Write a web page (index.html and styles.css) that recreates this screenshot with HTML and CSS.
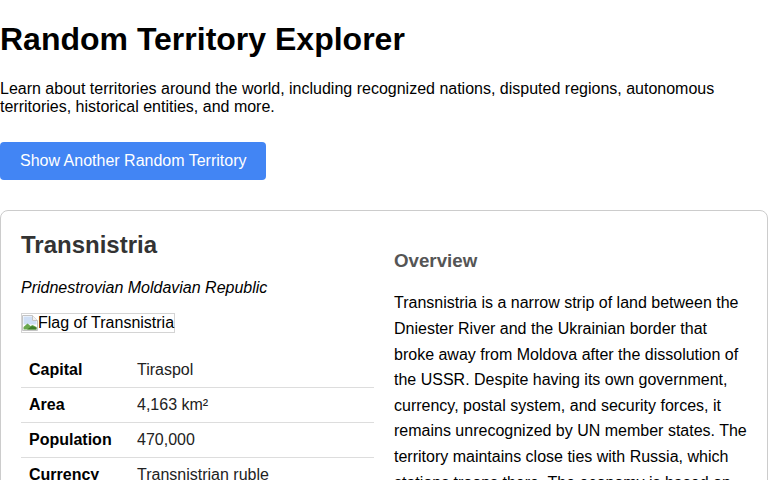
FILE: index.html
```html
<!DOCTYPE html>
<html lang="en">
<head>
<meta charset="utf-8">
<title>Random Territory Explorer</title>
<link rel="stylesheet" href="styles.css">
</head>
<body>
<h1 class="title">Random Territory Explorer</h1>
<p class="intro">Learn about territories around the world, including recognized nations, disputed regions, autonomous territories, historical entities, and more.</p>
<button class="btn">Show Another Random Territory</button>
<section class="card">
  <div class="col">
    <h2 class="name">Transnistria</h2>
    <p class="official">Pridnestrovian Moldavian Republic</p>
    <div class="flag"><svg class="broken" width="16" height="16" viewBox="0 0 16 16"><path d="M.5.5h10l5 5v10H.5z" fill="#fff" stroke="#c4c4c4"/><path d="M10.5.5v5h5" fill="#f2f2f2" stroke="#c4c4c4"/><path d="M1.500 1.500h8.500v4.500h4.500v3.500h-13z" fill="#cfdff5"/><path d="M1.500 14.500v-2.500l4-3.500 3 2.500 2-1 4 2v2.500z" fill="#6aa84f"/><path d="M5 14.500l5-3.500 4.500 1.500v2z" fill="#3f7d2a"/></svg><span>Flag of Transnistria</span></div>
    <table class="facts">
      <tr><th>Capital</th><td>Tiraspol</td></tr>
      <tr><th>Area</th><td>4,163 km²</td></tr>
      <tr><th>Population</th><td>470,000</td></tr>
      <tr><th>Currency</th><td>Transnistrian ruble</td></tr>
    </table>
  </div>
  <div class="col">
    <h3 class="overview">Overview</h3>
    <p class="desc">Transnistria is a narrow strip of land between the Dniester River and the Ukrainian border that broke away from Moldova after the dissolution of the USSR. Despite having its own government, currency, postal system, and security forces, it remains unrecognized by UN member states. The territory maintains close ties with Russia, which stations troops there. The economy is based on</p>
  </div>
</section>
</body>
</html>
```
FILE: styles.css
```css
html, body { margin: 0; padding: 0; }
body { font-family: "Liberation Sans", Arial, sans-serif; font-size: 16px; line-height: 1.15; color: #000; background: #fff; height: 480px; overflow: hidden; }
.title { font-size: 32px; line-height: 37px; font-weight: 700; margin: 0; padding-top: 21px; }
.intro { margin: 22px 0 0; line-height: 18px; }
.btn { display: block; margin-top: 26px; height: 38px; padding: 0 20px; border: 0; border-radius: 4px; background: #4285f4; color: #fff; font: 16px "Liberation Sans", Arial, sans-serif; }
.card { margin-top: 30px; border: 1px solid #ccc; border-radius: 8px; padding: 20px; display: grid; grid-template-columns: 1fr 1fr; gap: 20px; }
.name { margin: 0; font-size: 24px; line-height: 28px; font-weight: 700; color: #333; }
.official { margin: 20px 0 0; font-style: italic; line-height: 18px; }
.flag { display: inline-flex; align-items: center; margin-top: 16px; border: 1px solid #d4d4d4; height: 18px; }
.facts { width: 100%; border-collapse: collapse; margin-top: 18px; }
.facts th { text-align: left; padding: 8px; font-weight: 700; border-bottom: 1px solid #ddd; line-height: 18px; width: 92px; }
.facts td { padding: 8px; border-bottom: 1px solid #ddd; line-height: 18px; color: #222; }
.overview { margin: 19px 0 0; font-size: 18.72px; line-height: 22px; color: #555; }
.desc { margin: 18.400px 0 0; line-height: 25.6px; }
```
